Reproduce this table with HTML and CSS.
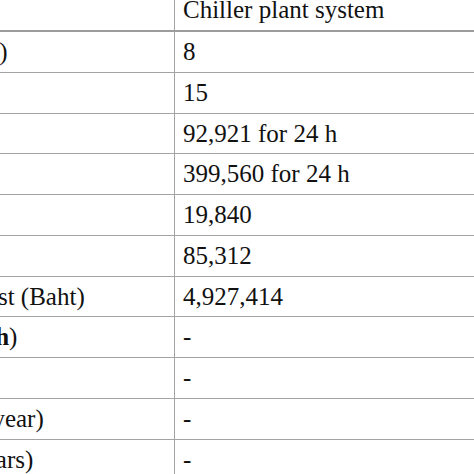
FILE: index.html
```html
<!DOCTYPE html>
<html lang="en">
<head>
<meta charset="utf-8">
<title>Chiller plant system</title>
<link rel="stylesheet" href="styles.css">
</head>
<body>
<div class="sheet">
  <div class="row head">
    <div class="label"></div>
    <div class="value">Chiller plant system</div>
  </div>
  <div class="row"><div class="label">Chillers (units)</div><div class="value">8</div></div>
  <div class="row"><div class="label">Hours (h)</div><div class="value">15</div></div>
  <div class="row"><div class="label">Load (kWh)</div><div class="value">92,921 for 24 h</div></div>
  <div class="row"><div class="label">Load (RTh)</div><div class="value">399,560 for 24 h</div></div>
  <div class="row"><div class="label">Cost (Baht)</div><div class="value">19,840</div></div>
  <div class="row"><div class="label">Total (Baht)</div><div class="value">85,312</div></div>
  <div class="row"><div class="label">Investment cost (Baht)</div><div class="value">4,927,414</div></div>
  <div class="row"><div class="label">Demand (<b>kWh</b>)</div><div class="value">-</div></div>
  <div class="row"><div class="label">Saving (%)</div><div class="value">-</div></div>
  <div class="row"><div class="label">Profits (Baht/year)</div><div class="value">-</div></div>
  <div class="row"><div class="label">Life cycle (years)</div><div class="value">-</div></div>
</div>
</body>
</html>
```
FILE: styles.css
```css
html, body {
  margin: 0;
  padding: 0;
  background: #ffffff;
  overflow: hidden;
  width: 474px;
  height: 474px;
}

.sheet {
  margin-left: -150px;
  margin-top: -9.78px;
  width: 700px;
  font-family: "Liberation Serif", "Times New Roman", serif;
  font-size: 25px;
  color: #111111;
}

.row {
  display: grid;
  grid-template-columns: 325px 1fr;
  height: 40.78px;
  box-sizing: border-box;
  border-bottom: 1px solid #a3a3a3;
}

.row.head {
  height: 41.78px;
  border-bottom: 2px solid #9c9c9c;
}

.label,
.value {
  line-height: 39.78px;
  white-space: nowrap;
}

.label {
  box-sizing: border-box;
  padding-left: 7px;
  border-right: 1px solid #a3a3a3;
}

.value {
  padding-left: 8px;
}

.label b {
  font-weight: bold;
}
```
